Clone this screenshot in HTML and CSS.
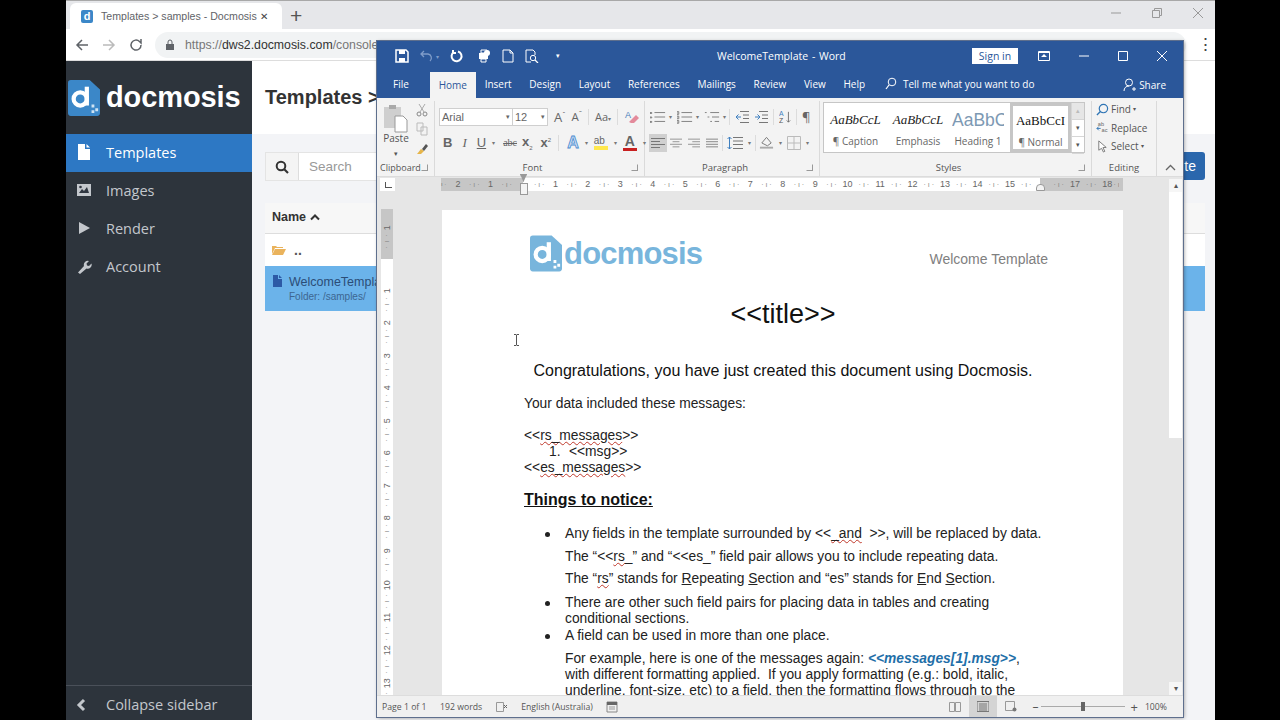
FILE: index.html
```html
<!DOCTYPE html>
<html lang="en">
<head>
  <meta charset="UTF-8" />
  <title>Templates > samples - Docmosis</title>
  <link rel="stylesheet" href="styles.css">
</head>
<body>
  <div class="browser">
    <!-- tabs -->
    <div class="tabstrip">
      <div class="tab">
        <span class="favicon">d</span>
        <span class="tab-title">Templates &gt; samples - Docmosis</span>
        <span class="tab-x">✕</span>
      </div>
      <span class="newtab">+</span>
      <div class="win-btns">
        <svg width="12" height="12"><path d="M1 6h10" stroke="#999"/></svg>
        <svg width="12" height="12"><path d="M1.5 3.5h7v7h-7zM3.5 3.5v-2h7v7h-2" stroke="#999" fill="none"/></svg>
        <svg width="12" height="12"><path d="M1 1l10 10M11 1L1 11" stroke="#999"/></svg>
      </div>
    </div>
    <!-- address bar -->
    <div class="toolbar">
      <svg width="16" height="16" viewBox="0 0 16 16"><path d="M14 8H3M8 3L3 8l5 5" fill="none" stroke="#5f6368" stroke-width="1.5"/></svg>
      <svg width="16" height="16" viewBox="0 0 16 16"><path d="M2 8h11M8 3l5 5-5 5" fill="none" stroke="#bbb" stroke-width="1.5"/></svg>
      <svg width="16" height="16" viewBox="0 0 16 16"><path d="M13 8a5 5 0 1 1-1.5-3.5L13 6V2" fill="none" stroke="#5f6368" stroke-width="1.5"/></svg>
      <div class="omnibox">
        <svg width="10" height="12" viewBox="0 0 10 12"><path d="M1 5h8v6H1z" fill="#5f6368"/><path d="M3 5V3a2 2 0 0 1 4 0v2" fill="none" stroke="#5f6368"/></svg>
        <span class="url">https://<b>dws2.docmosis.com</b>/console/templates</span>
      </div>
      <span class="dots">⋮</span>
    </div>
    <div class="app">
      <aside class="sidebar">
        <div class="brand">
          <svg class="brand-logo" width="32" height="38" viewBox="0 0 34 38">
            <path d="M3 0h20l11 10v25a3 3 0 0 1-3 3H3a3 3 0 0 1-3-3V3a3 3 0 0 1 3-3z" fill="#3b87c8"/>
            <circle cx="13" cy="20" r="7" fill="none" stroke="#fff" stroke-width="4.5"/>
            <path d="M20 7v20" stroke="#fff" stroke-width="4.5"/>
            <path d="M25 26h3v3h-3zM29 30h3v3h-3zM25 32h3v3h-3z" fill="#cfe3f3"/>
          </svg>
          <span class="brand-name">docmosis</span>
        </div>
        <nav class="nav">
          <a class="nav-item active">
            <svg width="16" height="18" viewBox="0 0 16 18"><path d="M2 1h7v5h5v11H2zM10.5 1l3.5 3.5h-3.5z" fill="#fff"/></svg>
            Templates
          </a>
          <a class="nav-item">
            <svg width="16" height="18" viewBox="0 0 16 18"><path d="M1 3h14v12H1z" fill="#c3c7cc"/><path d="M3 12l3-4 2 2 3-4 2 6z" fill="#2f3640"/><circle cx="4.5" cy="6" r="1.3" fill="#2f3640"/></svg>
            Images
          </a>
          <a class="nav-item">
            <svg width="16" height="18" viewBox="0 0 16 18"><path d="M3 3l11 6-11 6z" fill="#c3c7cc"/></svg>
            Render
          </a>
          <a class="nav-item">
            <svg width="16" height="18" viewBox="0 0 16 18"><path d="M2 15.5l6-6.5a4 4 0 0 1 5-5l-2.5 2.5.5 2 2 .5L15.5 6.5a4 4 0 0 1-5 5L4 17z" fill="#c3c7cc"/></svg>
            Account
          </a>
        </nav>
        <a class="collapse">
          <svg width="16" height="14" viewBox="0 0 16 14"><path d="M10 2L5 7l5 5" fill="none" stroke="#c3c7cc" stroke-width="3"/></svg>
          Collapse sidebar
        </a>
      </aside>
      <main class="main">
        <h2 class="crumbs">Templates &gt;</h2>
        <div class="content">
          <div class="search">
            <span class="search-btn">
              <svg width="14" height="14" viewBox="0 0 14 14"><circle cx="6" cy="6" r="4.3" fill="none" stroke="#333" stroke-width="2"/><path d="M9 9l4 4" stroke="#333" stroke-width="2.2"/></svg>
            </span>
            <span class="search-input">Search</span>
          </div>
          <div class="create-btn">te</div>
          <div class="table">
            <div class="thead">Name <svg width="10" height="7" viewBox="0 0 10 7"><path d="M1 5.5l4-4 4 4" fill="none" stroke="#333" stroke-width="2"/></svg></div>
            <div class="row-up">
              <svg width="14" height="12" viewBox="0 0 14 12"><path d="M0 2h4l1 1h6v1H3L0 10zM3 5h11l-3 6H0z" fill="#eab35c"/></svg>
              <span>..</span>
            </div>
            <div class="row-sel">
              <svg width="9" height="12" viewBox="0 0 9 12"><path d="M0 0h5v4h4v8H0zM6 0l3 3H6z" fill="#2d5aa6"/></svg>
              <div>
                <div class="row-name">WelcomeTemplate</div>
                <div class="row-folder">Folder: /samples/</div>
              </div>
            </div>
          </div>
        </div>
      </main>
    </div>
  </div>

  <!-- word window sits over the browser -->
  <div class="word">
    <div class="titlebar">
      <div class="qat">
        <svg width="14" height="14" viewBox="0 0 14 14"><path d="M1 1h10l2 2v10H1z" fill="none" stroke="#fff" stroke-width="1.5"/><path d="M4 1h6v4H4zM4 9h6v4H4z" fill="#fff"/></svg>
        <svg class="dim" width="14" height="14" viewBox="0 0 14 14"><path d="M4 2L1 5l3 3M1 5h7a4 4 0 0 1 2 7" fill="none" stroke="#7f9cc9" stroke-width="1.3"/></svg>
        <span class="dim-caret">▾</span>
        <svg width="14" height="14" viewBox="0 0 14 14"><path d="M8 2.5a5 5 0 1 1-4 .5M3 1v3h3" fill="none" stroke="#fff" stroke-width="2"/></svg>
        <svg width="16" height="14" viewBox="0 0 16 14"><path d="M4 4h9v6H4z" fill="#fff"/><path d="M6 1h6v3H6zM6 10h5v3H6z" fill="none" stroke="#fff"/><circle cx="12" cy="4" r="3" fill="#fff"/></svg>
        <svg width="12" height="14" viewBox="0 0 12 14"><path d="M1 1h7l3 3v9H1zM8 1v3h3" fill="none" stroke="#fff"/></svg>
        <svg width="14" height="14" viewBox="0 0 14 14"><path d="M1 1h7l2 2v3M1 1v12h5" fill="none" stroke="#fff"/><circle cx="8" cy="9" r="2.7" fill="none" stroke="#fff"/><path d="M10 11l3 3" stroke="#fff" stroke-width="1.3"/></svg>
        <span class="qat-more">▾</span>
      </div>
      <div class="doc-title">WelcomeTemplate - Word</div>
      <div class="title-right">
        <span class="signin">Sign in</span>
        <svg width="12" height="10" viewBox="0 0 12 10"><path d="M.5.5h11v9H.5z" fill="none" stroke="#fff"/><path d="M3 6l3-3 3 3zM1 1h10v1H1z" fill="#fff"/></svg>
        <span class="ctl-group">
          <svg width="10" height="10"><path d="M0 5h10" stroke="#fff"/></svg>
          <svg width="10" height="10"><path d="M.5.5h9v9h-9z" fill="none" stroke="#fff"/></svg>
          <svg width="10" height="10"><path d="M0 0l10 10M10 0L0 10" stroke="#fff"/></svg>
        </span>
      </div>
    </div>
    <div class="tabs">
      <span class="rtab file">File</span>
      <span class="rtab current">Home</span>
      <span class="rtab">Insert</span>
      <span class="rtab">Design</span>
      <span class="rtab">Layout</span>
      <span class="rtab">References</span>
      <span class="rtab">Mailings</span>
      <span class="rtab">Review</span>
      <span class="rtab">View</span>
      <span class="rtab">Help</span>
      <span class="tell">
        <svg width="12" height="14" viewBox="0 0 12 14"><circle cx="7" cy="5" r="3.8" fill="none" stroke="#fff"/><path d="M4 8l-3 4" stroke="#fff" stroke-width="1.2"/></svg>
        Tell me what you want to do
      </span>
      <span class="share">
        <svg width="14" height="14" viewBox="0 0 14 14"><circle cx="6" cy="4.5" r="3.5" fill="none" stroke="#fff"/><path d="M1 13c0-3 2-5 5-5M9 11h4M11 9v4" fill="none" stroke="#fff"/></svg>
        Share
      </span>
    </div>
    <div class="ribbon">
      <section class="grp g-clip">
        <div class="grp-body clip">
          <div class="paste">
            <svg width="26" height="29" viewBox="0 0 26 29"><path d="M1 3h17v21H1z" fill="#cfcfcf"/><path d="M6 1h7v4H6z" fill="#aaa"/><path d="M12 12h8l4 4v12H12z" fill="#fff" stroke="#999"/></svg>
            <span>Paste</span>
            <span class="caret">▾</span>
          </div>
          <div class="clip-tools">
            <svg width="12" height="14" viewBox="0 0 12 14"><circle cx="3" cy="11" r="2" fill="none" stroke="#888"/><circle cx="9" cy="11" r="2" fill="none" stroke="#888"/><path d="M4 9L9 1M8 9L3 1" stroke="#aaa"/></svg>
            <svg width="12" height="14" viewBox="0 0 12 14"><path d="M1 1h6v8H1zM5 5h6v8H5z" fill="#f3f3f3" stroke="#bbb"/></svg>
            <svg width="12" height="14" viewBox="0 0 12 14"><path d="M1 13l4-5 3 2-3 3z" fill="#e6b54a"/><path d="M6 8l4-5 2 2-4 5z" fill="#555"/></svg>
          </div>
        </div>
        <div class="grp-label">Clipboard<i class="launch"></i></div>
      </section>
      <section class="grp g-font">
        <div class="grp-body stack">
          <div class="line">
            <span class="combo font-name">Arial<em>▾</em></span><span class="combo font-size">12<em>▾</em></span>
            <span class="ic grow">A<sup>ˆ</sup></span><span class="ic grow small">A<sup>ˇ</sup></span>
            <span class="sep"></span>
            <span class="ic case">Aa<em>▾</em></span>
            <span class="sep"></span>
            <svg width="16" height="16" viewBox="0 0 14 16"><text x="0" y="9" font-size="9" font-family="Liberation Sans" fill="#4a7ebb">A</text><path d="M4 13l7-7 3 3-5 5H6z" fill="#e38a9b"/></svg>
          </div>
          <div class="line fmt">
            <b class="ic">B</b><i class="ic it">I</i><u class="ic">U</u><em class="cr">▾</em>
            <s class="ic abc">abc</s><span class="ic sub">x<sub>2</sub></span><span class="ic sub sup-x">x<sup>2</sup></span>
            <span class="sep"></span>
            <span class="ic glow">A</span><em class="cr">▾</em>
            <span class="ic hl">ab</span><em class="cr">▾</em>
            <span class="ic fc">A</span><em class="cr">▾</em>
          </div>
        </div>
        <div class="grp-label">Font<i class="launch"></i></div>
      </section>
      <section class="grp g-para">
        <div class="grp-body stack">
          <div class="line para-top">
            <svg width="16" height="14" viewBox="0 0 18 14"><path d="M0 2h2v1H0zM0 7h2v1H0zM0 12h2v1H0zM5 2h12M5 7h12M5 12h12" stroke="#777" fill="none"/></svg><em class="cr">▾</em>
            <svg width="16" height="14" viewBox="0 0 18 14"><path d="M0 1h2v3H0zM0 6h2v3H0zM0 11h2v3H0zM5 2h12M5 7h12M5 12h12" stroke="#777" fill="none"/></svg><em class="cr">▾</em>
            <svg width="16" height="14" viewBox="0 0 18 14"><path d="M1 2h2M7 2h10M4 7h2M9 7h8M7 12h2M12 12h5" stroke="#777" fill="none"/></svg><em class="cr">▾</em>
            <span class="sep first"></span>
            <svg width="14" height="14" viewBox="0 0 14 14"><path d="M5 1.5h9M8 5h6M8 8.5h6M5 12.5h9" stroke="#777"/><path d="M6 7H1M3.5 4.5L1 7l2.500 2.500" fill="none" stroke="#3f7fbf"/></svg>
            <svg width="14" height="14" viewBox="0 0 14 14"><path d="M5 1.5h9M8 5h6M8 8.5h6M5 12.5h9" stroke="#777"/><path d="M1 7h5M3.5 4.5L6 7 3.5 9.5" fill="none" stroke="#3f7fbf"/></svg>
            <span class="sep"></span>
            <svg width="12" height="16" viewBox="0 0 14 16"><text x="0" y="7" font-size="8" font-family="Liberation Sans" fill="#3f7fbf">A</text><text x="0" y="15" font-size="8" font-family="Liberation Sans" fill="#555">Z</text><path d="M11 2v12M9 12l2 2 2-2" fill="none" stroke="#666"/></svg>
            <span class="sep"></span>
            <span class="ic pilcrow">¶</span>
          </div>
          <div class="line para-bot">
            <span class="align on"><svg width="14" height="10" viewBox="0 0 14 10"><path d="M0 .5h14M0 3.5h9M0 6.5h14M0 9.5h9" stroke="#777"/></svg></span>
            <span class="align"><svg width="12" height="10" viewBox="0 0 14 10"><path d="M0 .5h14M3 3.5h8M0 6.5h14M3 9.5h8" stroke="#888"/></svg></span>
            <span class="align"><svg width="12" height="10" viewBox="0 0 14 10"><path d="M0 .5h14M5 3.5h9M0 6.5h14M5 9.5h9" stroke="#888"/></svg></span>
            <span class="align"><svg width="12" height="10" viewBox="0 0 14 10"><path d="M0 .5h14M0 3.5h14M0 6.5h14M0 9.5h14" stroke="#777"/></svg></span>
            <span class="sep"></span>
            <svg width="16" height="14" viewBox="0 0 16 14"><path d="M6 1.5h10M6 5h10M6 8.5h10M6 12.5h10" stroke="#777"/><path d="M2.5 1v12M.5 3l2-2 2 2M.5 11l2 2 2-2" fill="none" stroke="#3f7fbf"/></svg><em class="cr">▾</em>
            <span class="sep tight"></span>
            <svg width="15" height="15" viewBox="0 0 16 15"><path d="M3 8l5-6 5 6-4 3z" fill="none" stroke="#777"/><path d="M1 13h14" stroke="#aaa" stroke-width="2"/></svg><em class="cr">▾</em>
            <svg width="14" height="14" viewBox="0 0 14 14"><path d="M.5.5h13v13H.5zM7 .5v13M.5 7h13" fill="none" stroke="#bbb"/></svg><em class="cr">▾</em>
          </div>
        </div>
        <div class="grp-label">Paragraph<i class="launch"></i></div>
      </section>
      <section class="grp g-styles">
        <div class="grp-body">
          <div class="gallery">
            <div class="style st-1"><span class="s-serif">AaBbCcL</span><small>¶ Caption</small></div>
            <div class="style st-2"><span class="s-serif">AaBbCcL</span><small>Emphasis</small></div>
            <div class="style st-3"><span class="s-head">AaBbCc</span><small>Heading 1</small></div>
            <div class="style selected"><span class="s-normal">AaBbCcI</span><small>¶ Normal</small></div>
            <div class="gallery-arrows">
              <span class="off">▴</span><span>▾</span><span>▾</span>
            </div>
          </div>
        </div>
        <div class="grp-label">Styles<i class="launch"></i></div>
      </section>
      <section class="grp g-edit">
        <div class="grp-body edit">
          <span><svg width="13" height="13" viewBox="0 0 14 14"><circle cx="8" cy="6" r="4.5" fill="none" stroke="#2f75b5" stroke-width="1.3"/><path d="M5 9l-4 4" stroke="#2f75b5" stroke-width="1.5"/></svg>Find <em>▾</em></span>
          <span><svg width="13" height="13" viewBox="0 0 14 14"><path d="M1 8h4M3 6L1 8l2 2" fill="none" stroke="#2f75b5"/><text x="2" y="5" font-size="6" font-family="Liberation Sans" fill="#666">ab</text><text x="6" y="12" font-size="6" font-family="Liberation Sans" fill="#666">ac</text></svg>Replace</span>
          <span><svg width="13" height="13" viewBox="0 0 14 14"><path d="M3 1v10l3-2 2 4 1.5-.8-2-4 3.5-.2z" fill="#fff" stroke="#777"/></svg>Select <em>▾</em></span>
        </div>
        <div class="grp-label">Editing</div>
      </section>
      <svg class="ribbon-collapse" width="11" height="7" viewBox="0 0 11 7"><path d="M1 6l4.5-4.500L10 6" fill="none" stroke="#666" stroke-width="1.3"/></svg>
    </div>

    <div class="word-body">
      <div class="doc-col">
        <div class="ruler-h">
          <span class="tab-stop"></span>
          <div class="hr-track">
            <span class="hr-lead">ı ·</span>
            <div class="hr-cell"><b>2</b></div><div class="hr-cell"><b>1</b></div><div class="hr-cell"><b></b></div>
            <div class="hr-cell"><b>1</b></div><div class="hr-cell"><b>2</b></div><div class="hr-cell"><b>3</b></div><div class="hr-cell"><b>4</b></div><div class="hr-cell"><b>5</b></div><div class="hr-cell"><b>6</b></div><div class="hr-cell"><b>7</b></div><div class="hr-cell"><b>8</b></div><div class="hr-cell"><b>9</b></div><div class="hr-cell"><b>10</b></div><div class="hr-cell"><b>11</b></div><div class="hr-cell"><b>12</b></div><div class="hr-cell"><b>13</b></div><div class="hr-cell"><b>14</b></div><div class="hr-cell"><b>15</b></div><div class="hr-cell"><b></b></div>
            <div class="hr-cell"><b>17</b></div><div class="hr-cell"><b>18</b></div>
            <i class="indent-top"></i><i class="indent-bot"></i><i class="indent-right"></i>
          </div>
        </div>

        <div class="doc-area">
          <div class="ruler-v">
            <div class="vr-gray"><span>1</span></div>
            <div class="vr-white">
              <span>1</span><span>2</span><span>3</span><span>4</span><span>5</span><span>6</span><span>7</span><span>8</span><span>9</span><span>10</span><span>11</span><span>12</span><span>13</span>
            </div>
          </div>
          <div class="pasteboard">
            <article class="page">
              <svg class="ibeam" width="7" height="12" viewBox="0 0 7 12"><path d="M1 .5h2l.5.5.5-.5h2M3.5 1v10M1 11.5h2l.5-.5.5.5h2" fill="none" stroke="#555"/></svg>
              <header class="page-head">
                <div class="doc-logo">
                  <svg width="32" height="37" viewBox="0 0 34 38">
                    <path d="M3 0h20l11 10v25a3 3 0 0 1-3 3H3a3 3 0 0 1-3-3V3a3 3 0 0 1 3-3z" fill="#78b5dc"/>
                    <circle cx="13" cy="20" r="7" fill="none" stroke="#fff" stroke-width="4.5"/>
                    <path d="M20 7v20" stroke="#fff" stroke-width="4.5"/>
                    <path d="M25 26h3v3h-3zM29 30h3v3h-3zM25 32h3v3h-3z" fill="#fff"/>
                  </svg>
                  <span>docmosis</span>
                </div>
                <span class="head-note">Welcome Template</span>
              </header>
              <h1 class="doc-title-field">&lt;&lt;title&gt;&gt;</h1>
              <p class="congrats">Congratulations, you have just created this document using Docmosis.</p>
              <p class="dp">Your data included these messages:</p>
              <p class="dp fields">&lt;&lt;<u class="sq">rs_messages</u>&gt;&gt;<br><span class="num">1.</span>&lt;&lt;msg&gt;&gt;<br>&lt;&lt;<u class="sq">es_messages</u>&gt;&gt;</p>
              <h3 class="notice">Things to notice:</h3>
              <ul class="bullets">
                <li>Any fields in the template surrounded by &lt;&lt;<u class="sq">_and</u>&nbsp; &gt;&gt;, will be replaced by data.
                  <p>The “&lt;&lt;<u class="sq">rs</u>_” and “&lt;&lt;es_” field pair allows you to include repeating data.</p>
                  <p class="last">The “<u class="sq">rs</u>” stands for <u>R</u>epeating <u>S</u>ection and “es” stands for <u>E</u>nd <u>S</u>ection.</p>
                </li>
                <li>There are other such field pairs for placing data in tables and creating conditional sections.</li>
                <li class="third">A field can be used in more than one place.
                  <p>For example, here is one of the messages again: <b class="msg">&lt;&lt;messages[1].msg&gt;&gt;</b>, with different formatting applied.&nbsp; If you apply formatting (e.g.: bold, italic, underline, font-size, etc) to a field, then the formatting flows through to the</p>
                </li>
              </ul>
            </article>
          </div>
        </div>
      </div>
      <div class="vscroll">
        <span class="sb-arrow">▴</span>
        <div class="sb-track"><div class="sb-thumb"></div></div>
        <span class="sb-arrow">▾</span>
      </div>
    </div>

    <footer class="status">
      <span>Page 1 of 1</span>
      <span>192 words</span>
      <svg width="12" height="12" viewBox="0 0 12 12"><path d="M.5 1.5h7v9h-7z" fill="none" stroke="#999"/><path d="M8 4l3 3M11 4L8 7" stroke="#666"/></svg>
      <span>English (Australia)</span>
      <svg width="12" height="12" viewBox="0 0 12 12"><path d="M1 1h10v10H1z" fill="none" stroke="#888"/><path d="M1 1h10v3H1z" fill="#666"/><path d="M3 6h6M3 8h6" stroke="#999"/></svg>
      <div class="status-right">
        <span class="view"><svg width="12" height="10" viewBox="0 0 12 10"><path d="M.5.5h5v9h-5zM6.5.5h5v9h-5z" fill="none" stroke="#999"/></svg></span>
        <span class="view on"><svg width="12" height="11" viewBox="0 0 12 11"><path d="M0 .5h12v10H0zM2 3h8M2 5h8M2 7h8M2 9h8" fill="none" stroke="#777"/></svg></span>
        <span class="view"><svg width="12" height="11" viewBox="0 0 12 11"><path d="M.5.5h9v9h-9z" fill="none" stroke="#999"/><circle cx="9.5" cy="8.5" r="2" fill="#777"/></svg></span>
        <span class="zoom-minus">–</span>
        <div class="slider"><i></i></div>
        <span class="zoom-plus">+</span>
        <span class="zoom-val">100%</span>
      </div>
    </footer>
  </div>
</body>
</html>
```

FILE: styles.css
```css
* {
  box-sizing: border-box;
}

body {
  margin: 0;
  height: 720px;
  background-color: #000;
  font-family: "Liberation Sans", Arial, sans-serif;
  overflow: hidden;
  position: relative;
}

em {
  font-style: normal;
}

/* browser behind */

.browser {
  width: 1149px;
  height: 720px;
  margin-left: 66px;
  background-color: #fff;
  display: flex;
  flex-direction: column;
}

.tabstrip {
  height: 29px;
  background-color: #e6e7ea;
  border-top: 1px solid #a8a8a8;
  display: flex;
  align-items: flex-end;
}

.tab {
  width: 212px;
  height: 26px;
  margin-left: 4px;
  background-color: #fff;
  border-radius: 6px 6px 0 0;
  display: flex;
  align-items: center;
  padding-left: 11px;
  font-size: 10.6px;
  color: #5f6368;
}

.favicon {
  width: 12px;
  height: 13px;
  background-color: #3b87c8;
  border-radius: 2px;
  color: #fff;
  font-size: 11px;
  font-weight: bold;
  line-height: 12px;
  text-align: center;
  margin-right: 8px;
}

.tab-title {
  width: 156px;
  white-space: nowrap;
}

.tab-x {
  margin-left: 3px;
  font-size: 10px;
  color: #444;
}

.newtab {
  font-size: 21px;
  line-height: 27px;
  color: #555;
  margin-left: 8px;
}

.win-btns {
  margin-left: auto;
  align-self: flex-start;
  display: flex;
  gap: 29px;
  padding: 6px 11px 0 0;
}

.toolbar {
  height: 32px;
  display: flex;
  align-items: center;
  gap: 11px;
  padding: 0 10px 0 8px;
  border-bottom: 1px solid #ddd;
}

.omnibox {
  flex: 1;
  height: 26px;
  background-color: #f1f3f4;
  border-radius: 13px;
  display: flex;
  align-items: center;
  padding-left: 10px;
  gap: 10px;
  font-size: 12.3px;
  color: #777;
}

.url b {
  font-weight: normal;
  color: #333;
}

.dots {
  color: #444;
  font-size: 17px;
  width: 8px;
}

.app {
  flex: 1;
  display: flex;
  min-height: 0;
}

.sidebar {
  width: 186px;
  background-color: #2d343c;
  display: flex;
  flex-direction: column;
}

.brand {
  height: 73px;
  display: flex;
  align-items: center;
  padding-left: 2px;
  gap: 6px;
}

.brand-name {
  color: #fff;
  font-size: 29px;
  font-weight: bold;
  letter-spacing: -0.1px;
}

.nav-item {
  height: 38px;
  display: flex;
  align-items: center;
  padding: 0 0 2px 10px;
  gap: 14px;
  color: #c3c7cc;
  font-family: "Open Sans", sans-serif;
  font-size: 14.5px;
}

.nav-item.active {
  background-color: #2d78c4;
  color: #fff;
}

.collapse {
  margin-top: auto;
  height: 35px;
  border-top: 1px solid #4a5059;
  display: flex;
  align-items: center;
  padding: 3px 0 0 8px;
  gap: 16px;
  color: #c3c7cc;
  font-family: "Open Sans", sans-serif;
  font-size: 14.5px;
}

.main {
  flex: 1;
  background-color: #f3f4f7;
  display: flex;
  flex-direction: column;
}

.crumbs {
  height: 73px;
  margin: 0;
  background-color: #fff;
  font-size: 20px;
  line-height: 72px;
  padding-left: 13px;
  color: #333;
}

.content {
  padding: 18px 10px 0 13px;
  position: relative;
}

.search {
  display: flex;
  height: 29px;
  width: 200px;
  border: 1px solid #e4e4e4;
  background-color: #fff;
}

.search-btn {
  width: 33px;
  background-color: #f4f4f4;
  border-right: 1px solid #ddd;
  display: flex;
  align-items: center;
  justify-content: center;
}

.search-input {
  padding-left: 10px;
  line-height: 27px;
  font-size: 13.5px;
  color: #999;
}

.create-btn {
  position: absolute;
  right: 10px;
  top: 18px;
  width: 60px;
  height: 28px;
  background-color: #2a67ad;
  color: #fff;
  border-radius: 3px;
  font-size: 14px;
  line-height: 28px;
  text-align: right;
  padding-right: 9px;
}

.table {
  margin-top: 22px;
}

.thead {
  height: 31px;
  background-color: #f7f7f7;
  border-bottom: 1px solid #ddd;
  font-size: 12.5px;
  font-weight: bold;
  color: #333;
  line-height: 29px;
  padding-left: 7px;
}

.row-up {
  height: 32px;
  background-color: #fff;
  display: flex;
  align-items: center;
  padding-left: 7px;
  gap: 8px;
  font-size: 14px;
  font-weight: bold;
  color: #555;
}

.row-sel {
  height: 45px;
  background-color: #6bb3ea;
  display: flex;
  padding: 9px 0 0 8px;
  gap: 7px;
}

.row-name {
  font-size: 12.5px;
  color: #2b4d77;
  line-height: 14px;
  white-space: nowrap;
}

.row-folder {
  font-size: 10px;
  color: #3d6690;
  line-height: 16px;
}

/* word window */

.word {
  position: absolute;
  left: 377px;
  top: 41px;
  width: 806px;
  height: 676px;
  background-color: #e6e6e6;
  box-shadow: 0 0 0 1px #5e6f8d, 1px 1px 4px rgba(0, 0, 0, 0.4);
  display: flex;
  flex-direction: column;
  overflow: hidden;
}

.titlebar {
  height: 31px;
  padding-bottom: 1px;
  background-color: #2b579a;
  display: flex;
  align-items: center;
  position: relative;
  color: #fff;
}

.qat {
  display: flex;
  align-items: center;
  gap: 11px;
  padding-left: 18px;
}

.dim-caret {
  font-size: 6px;
  color: #7f9cc9;
  margin-left: -9px;
}

.qat-more {
  font-size: 7px;
  margin-left: 6px;
}

.doc-title {
  position: absolute;
  left: 340px;
  top: 8px;
  font-family: "Open Sans", sans-serif;
  font-size: 10.5px;
  word-spacing: 1px;
}

.title-right {
  margin-left: auto;
  display: flex;
  align-items: center;
}

.signin {
  width: 46px;
  height: 16px;
  background-color: #fff;
  color: #2b579a;
  font-family: "Open Sans", sans-serif;
  font-size: 10.5px;
  line-height: 16px;
  text-align: center;
  margin-right: 20px;
}

.ctl-group {
  display: flex;
  gap: 29px;
  margin: 0 16px 0 29px;
}

.tabs {
  height: 26px;
  background-color: #2b579a;
  display: flex;
  align-items: stretch;
  color: #fff;
  font-family: "Open Sans", sans-serif;
  font-size: 10px;
  padding-left: 7px;
}

.rtab {
  padding: 0 8.85px;
  line-height: 24px;
}

.rtab.file {
  padding: 0 9px;
  margin-right: 12px;
}

.rtab.current {
  background-color: #f3f3f3;
  color: #2b579a;
  width: 46px;
  padding: 2px 0 0;
  margin-top: -1px;
  text-align: center;
}

.tell {
  display: flex;
  align-items: center;
  gap: 6px;
  margin-left: 11px;
  padding-bottom: 2px;
}

.share {
  margin-left: auto;
  display: flex;
  align-items: center;
  gap: 2px;
  margin-right: 17px;
}

.ribbon {
  height: 79px;
  background-color: #f3f3f3;
  border-bottom: 1px solid #dcdcdc;
  display: flex;
  position: relative;
  font-family: "Open Sans", sans-serif;
  color: #555;
}

.grp {
  display: flex;
  flex-direction: column;
  border-right: 1px solid #dadada;
  margin: 3px 0 0;
}

.grp-body {
  height: 60px;
}

.grp-label {
  height: 16px;
  padding-right: 14px;
  font-size: 9.5px;
  line-height: 15px;
  text-align: center;
  position: relative;
  white-space: nowrap;
}

.launch {
  position: absolute;
  right: 6px;
  top: 4px;
  width: 7px;
  height: 7px;
  border: 1px solid #999;
  border-top-color: transparent;
  border-left-color: transparent;
}

.g-clip { width: 58px; }
.g-font { width: 210px; }
.g-para { width: 175px; }
.g-styles { width: 272px; }
.g-edit { width: 65px; }

.g-clip .grp-label {
  font-size: 9px;
  padding-right: 0;
  padding-left: 3px;
  text-align: left;
}

.g-edit .grp-label {
  padding-right: 0;
}

.clip {
  display: flex;
  padding: 2px 0 0 4px;
}

.paste {
  width: 30px;
  display: flex;
  flex-direction: column;
  align-items: center;
  font-size: 10px;
  line-height: 11px;
  padding-top: 1px;
}

.paste .caret {
  font-size: 7px;
  margin-top: 4px;
}

.clip-tools {
  display: flex;
  flex-direction: column;
  gap: 5px;
  margin-left: 5px;
}

.stack {
  padding: 6px 0 0 4px;
  display: flex;
  flex-direction: column;
  gap: 7px;
}

.line {
  display: flex;
  align-items: center;
  height: 19px;
  gap: 6px;
}

.combo {
  height: 18px;
  background-color: #fff;
  border: 1px solid #cfcfcf;
  font-family: "Liberation Sans", sans-serif;
  font-size: 11px;
  line-height: 16px;
  padding-left: 2px;
  position: relative;
  color: #666;
}

.combo em {
  position: absolute;
  right: 2px;
  top: 0;
  font-size: 7px;
}

.font-name { width: 74px; }
.font-size { width: 36px; margin-left: -7px; }

.ic {
  font-size: 12px;
  color: #666;
  text-decoration-thickness: 1px;
}

.grow {
  font-size: 13px;
}

.grow sup {
  font-size: 8px;
  line-height: 0;
}

.grow.small {
  font-size: 11.5px;
}

.case {
  font-size: 11px;
}

.case em,
.cr {
  font-size: 6px;
  color: #777;
}

.sep {
  width: 1px;
  height: 16px;
  background-color: #dcdcdc;
}

.fmt {
  gap: 10px;
  padding-left: 4px;
}

.fmt .ic {
  font-family: "Liberation Serif", serif;
  font-size: 13px;
}

.fmt b.ic,
.fmt u.ic {
  font-family: "Liberation Sans", sans-serif;
}

.fmt .cr {
  margin: 0 -4px;
}

.fmt .abc {
  font-size: 10px;
  margin-left: 2px;
  margin-right: -5px;
}

.fmt .sub {
  font-weight: bold;
  font-family: "Liberation Sans", sans-serif;
}

.fmt .sup-x {
  margin-left: -2px;
}

.fmt .sep {
  margin: 0 -2px 0 -3px;
}

.sub sub, .sub sup {
  font-size: 6px;
  font-weight: normal;
}

.fmt .glow {
  font-family: "Liberation Sans", sans-serif;
  font-size: 16px;
  font-weight: bold;
  color: #cfe1f4;
  -webkit-text-stroke: 0.8px #4a8bd0;
}

.fmt .hl {
  font-family: "Liberation Sans", sans-serif;
  font-size: 10px;
  border-bottom: 4px solid #ffe84d;
  line-height: 11px;
  width: 14px;
}

.fmt .fc {
  font-family: "Liberation Sans", sans-serif;
  font-weight: bold;
  font-size: 14px;
  border-bottom: 3px solid #c82020;
  line-height: 13px;
  width: 14px;
  text-align: center;
}

.para-top {
  gap: 5px;
  padding-left: 1px;
}

.para-top .cr {
  margin-left: -2px;
}

.para-top .sep.first {
  margin-left: -2px;
}

.para-bot {
  gap: 5px;
  padding-left: 0;
}

.pilcrow {
  font-size: 13px;
}

.align {
  width: 18px;
  height: 18px;
  margin-right: -5px;
  display: flex;
  align-items: center;
  justify-content: center;
}

.align.on {
  background-color: #d0d0d0;
}

.para-bot .sep {
  margin: 0 -1px 0 1px;
}

.para-bot .sep.tight {
  margin: 0 -2px 0 -1px;
}

.gallery {
  margin: 1px 0 0 3px;
  height: 51px;
  width: 262px;
  border: 1px solid #c6c6c6;
  background-color: #fff;
  display: flex;
  align-items: stretch;
}

.style {
  display: flex;
  flex-direction: column;
  align-items: center;
  padding-top: 9px;
  overflow: hidden;
  white-space: nowrap;
}

.style small {
  font-size: 10px;
  color: #666;
  margin-top: 6px;
}

.st-1 { width: 63px; }
.st-2 { width: 62px; }
.st-3 { width: 58px; }

.style.selected {
  width: 61px;
  border: 3px solid #c6c6c6;
  padding-top: 7px;
  margin-left: 3px;
}

.s-serif {
  font-family: "Liberation Serif", serif;
  font-style: italic;
  font-size: 13px;
  color: #222;
  line-height: 16px;
}

.s-head {
  font-family: "Liberation Sans", sans-serif;
  font-size: 17.5px;
  color: #7d99b3;
  line-height: 16px;
  width: 52px;
  overflow: hidden;
}

.s-normal {
  font-family: "Liberation Serif", serif;
  font-size: 13px;
  color: #111;
  line-height: 16px;
}

.gallery-arrows {
  margin-left: auto;
  width: 13px;
  display: flex;
  flex-direction: column;
  border-left: 1px solid #d6d6d6;
}

.gallery-arrows span {
  flex: 1;
  font-size: 7px;
  line-height: 16px;
  text-align: center;
  border-bottom: 1px solid #d6d6d6;
}

.gallery-arrows .off {
  background-color: #e6e6e6;
  color: #bbb;
}

.edit {
  display: flex;
  flex-direction: column;
  gap: 2.5px;
  padding-left: 4px;
  font-size: 10px;
}

.edit span {
  display: flex;
  align-items: center;
  gap: 2px;
  height: 16px;
  white-space: nowrap;
}

.edit em {
  font-size: 6px;
}

.ribbon-collapse {
  position: absolute;
  left: 788px;
  top: 66px;
}

.word-body {
  flex: 1;
  display: flex;
  min-height: 0;
}

.doc-col {
  flex: 1;
  display: flex;
  flex-direction: column;
  min-width: 0;
}

.ruler-h {
  height: 20px;
  display: flex;
}

.tab-stop {
  width: 15px;
  height: 13px;
  margin: 1px 0 0 3px;
  background-color: #fff;
  padding: 4px 0 0 5px;
}

.tab-stop::before {
  content: "";
  display: block;
  width: 6px;
  height: 5px;
  border-left: 1.5px solid #555;
  border-bottom: 1.5px solid #555;
}

.hr-track {
  margin: 1px 0 0 46px;
  height: 13px;
  width: 682px;
  display: flex;
  position: relative;
  background: linear-gradient(to right, #c6c6c6 82px, #fff 82px, #fff 599px, #c6c6c6 599px);
  font-size: 9px;
  line-height: 13px;
  color: #666;
  white-space: pre;
}

.hr-lead {
  flex: 0 0 11px;
  font-size: 6px;
  color: #777;
}

.hr-cell {
  flex: 0 0 32.47px;
  display: flex;
}

.hr-cell b {
  font-weight: normal;
  width: 12px;
  text-align: center;
  flex: none;
}

.hr-cell::after {
  content: "· ı ·";
  flex: 1;
  text-align: center;
  color: #888;
  font-size: 7px;
}

.hr-cell:has(+ .indent-top) {
  flex-basis: 18px;
  overflow: hidden;
}

.indent-top,
.indent-bot,
.indent-right {
  position: absolute;
  background-color: #f4f4f4;
  border: 1px solid #999;
}

.indent-top {
  left: 79px;
  top: -4px;
  width: 7px;
  height: 8px;
  clip-path: polygon(0 0, 100% 0, 50% 100%);
  background-color: #999;
}

.indent-bot {
  left: 79px;
  top: 5px;
  width: 8px;
  height: 12px;
}

.indent-right {
  left: 595px;
  top: 6px;
  width: 9px;
  height: 7px;
  border-radius: 4px 4px 0 0;
}

.doc-area {
  flex: 1;
  display: flex;
  min-height: 0;
}

.ruler-v {
  width: 65px;
  padding: 12px 0 0 4px;
  flex: none;
  overflow: hidden;
}

.vr-gray,
.vr-white {
  width: 12px;
  font-size: 9px;
  line-height: 12px;
  color: #666;
  display: flex;
  flex-direction: column;
  white-space: pre;
}

.vr-gray {
  height: 50px;
  background-color: #c6c6c6;
  padding-top: 16px;
}

.vr-white {
  background-color: #fff;
  height: 480px;
  padding-top: 29px;
}

.vr-gray span,
.vr-white span {
  writing-mode: vertical-rl;
  transform: rotate(180deg);
  height: 32.47px;
  flex: none;
  text-align: right;
}

.vr-gray span::before,
.vr-white span::before {
  content: "·  ı  ·  ";
  color: #888;
  font-size: 7px;
}

.pasteboard {
  width: 681px;
  padding-top: 13px;
  overflow: hidden;
  flex: none;
}

.page {
  background-color: #fff;
  height: 700px;
  padding: 0 81px 0 82px;
  font-size: 13.8px;
  line-height: 16px;
  color: #222;
  position: relative;
}

.ibeam {
  position: absolute;
  left: 71px;
  top: 124px;
}

.page p {
  margin: 0;
}

.page-head {
  display: flex;
  justify-content: space-between;
  height: 66px;
  padding-top: 25px;
}

.doc-logo {
  display: flex;
  align-items: flex-start;
  margin-left: 6px;
  gap: 2px;
  color: #78b5dc;
  font-size: 31px;
  font-weight: bold;
  letter-spacing: -0.8px;
  line-height: 38px;
}

.head-note {
  font-size: 14px;
  color: #808080;
  padding-top: 16px;
  margin-right: -6px;
}

.doc-title-field {
  margin: 23px 0 0;
  font-size: 27px;
  font-weight: normal;
  line-height: 30px;
  text-align: center;
  color: #111;
}

.page .congrats {
  margin-top: 33px;
  font-size: 16px;
  line-height: 18px;
  text-align: center;
  color: #111;
}

.page .dp {
  margin-top: 16px;
}

.page .fields {
  margin-top: 16px;
}

.num {
  display: inline-block;
  width: 45px;
  padding-left: 25px;
}

.sq {
  text-decoration: underline wavy #c0392b 1px;
}

.notice {
  margin: 15px 0 0;
  font-size: 16px;
  line-height: 18px;
  text-decoration: underline;
  color: #111;
}

.bullets {
  margin: 17px 0 0;
  padding: 0 0 0 41px;
  list-style: none;
}

.bullets li {
  position: relative;
}

.bullets li.third {
  margin-top: 1px;
}

.bullets li::before {
  content: "";
  position: absolute;
  left: -20px;
  top: 6px;
  width: 5px;
  height: 5px;
  border-radius: 50%;
  background-color: #222;
}

.page .bullets p {
  margin-top: 7px;
}

.page .bullets p.last {
  margin-top: 6px;
  margin-bottom: 8px;
}

.msg {
  color: #1f6fa8;
  font-style: italic;
}

.vscroll {
  width: 13px;
  margin-right: 1px;
  display: flex;
  flex-direction: column;
  flex: none;
  padding-top: 2px;
}

.sb-arrow {
  height: 13px;
  background-color: #f6f6f6;
  font-size: 8px;
  line-height: 13px;
  text-align: center;
  color: #555;
}

.sb-track {
  flex: 1;
}

.sb-thumb {
  height: 246px;
  background-color: #fff;
}

.status {
  height: 22px;
  background-color: #f0f0f0;
  border-top: 1px solid #ddd;
  display: flex;
  align-items: center;
  gap: 13.5px;
  padding-left: 5px;
  font-family: "Open Sans", sans-serif;
  font-size: 8.7px;
  color: #555;
}

.status-right {
  margin-left: auto;
  display: flex;
  align-items: center;
  height: 100%;
}

.view {
  width: 28px;
  height: 100%;
  display: flex;
  align-items: center;
  justify-content: center;
}

.view.on {
  background-color: #d4d4d4;
}

.zoom-minus {
  margin-left: 7px;
  font-size: 12px;
}

.slider {
  width: 84px;
  height: 1px;
  background-color: #aaa;
  margin: 0 5px 0 3px;
  position: relative;
}

.slider i {
  position: absolute;
  left: 40px;
  top: -4px;
  width: 4px;
  height: 9px;
  background-color: #666;
}

.zoom-plus {
  font-size: 13px;
}

.zoom-val {
  margin: 0 16px 0 7px;
}
```
